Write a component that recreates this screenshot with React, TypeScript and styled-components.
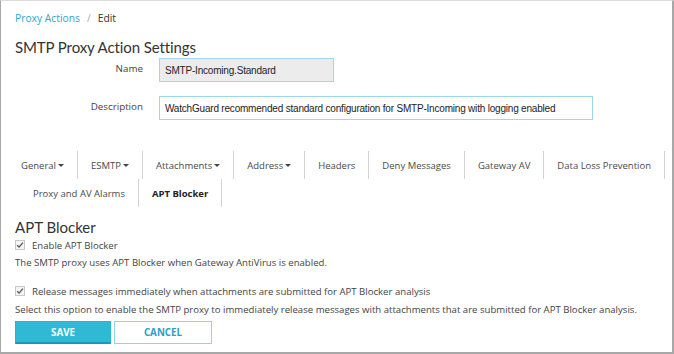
import styled, { createGlobalStyle } from "styled-components";

const GlobalStyle = createGlobalStyle`
  html, body {
    margin: 0;
    padding: 0;
    background: #ffffff;
  }
  * {
    box-sizing: border-box;
  }
`;

const Page = styled.div`
  width: 674px;
  height: 354px;
  display: flex;
  flex-direction: column;
  padding: 9px 0 0 14px;
  background: #ffffff;
  border-top: 1px solid #dcdcdc;
  border-left: 1px solid #a8a8a8;
  border-right: 2px solid #a8a8a8;
  border-bottom: 2px solid #a8a8a8;
  font-family: "Open Sans", "Liberation Sans", sans-serif;
  color: #333333;
  overflow: hidden;
`;

const Breadcrumb = styled.nav`
  display: flex;
  align-items: center;
  gap: 7px;
  height: 16px;
  font-size: 10.3px;
  color: #333333;
`;

const CrumbLink = styled.a`
  color: #2fa8cc;
  text-decoration: none;
`;

const CrumbSep = styled.span`
  color: #aaaaaa;
`;

const Title = styled.h1`
  margin: 11px 0 0 0;
  height: 20px;
  line-height: 20px;
  font-family: "Lato", "Open Sans", sans-serif;
  font-weight: 400;
  font-size: 15px;
  letter-spacing: -0.1px;
  color: #333333;
`;

const Form = styled.div`
  display: grid;
  grid-template-columns: 128px auto;
  column-gap: 16px;
  row-gap: 14px;
  margin-top: 1px;
  align-items: center;
`;

const Label = styled.label`
  text-align: right;
  font-size: 9.8px;
  color: #444444;
  padding-bottom: 4px;
`;

const Field = styled.div<{ $width: number; $readOnly?: boolean }>`
  width: ${(p) => p.$width}px;
  height: 24px;
  display: flex;
  align-items: center;
  padding: 0 5px;
  border: 1px solid #9fd8ea;
  background: ${(p) => (p.$readOnly ? "#ececec" : "#ffffff")};
  font-family: "Liberation Sans", Arial, sans-serif;
  font-size: 10px;
  letter-spacing: -0.2px;
  color: #222222;
  white-space: nowrap;
`;

const Tabs = styled.div`
  margin-top: 31px;
  margin-left: -7px;
  display: flex;
  flex-direction: column;
`;

const TabRow = styled.div<{ $indent?: number }>`
  display: flex;
  padding-left: ${(p) => p.$indent ?? 0}px;
`;

const Tab = styled.div<{ $active?: boolean }>`
  height: 28px;
  display: flex;
  align-items: center;
  padding: 0 13px;
  border-right: 1px solid #d3d3d3;
  font-size: 9.5px;
  font-weight: ${(p) => (p.$active ? 700 : 400)};
  color: ${(p) => (p.$active ? "#222222" : "#4a4a4a")};
  white-space: nowrap;
`;

const Caret = styled.span`
  display: inline-block;
  margin-left: 2px;
  margin-top: 1px;
  width: 0;
  height: 0;
  border-left: 3px solid transparent;
  border-right: 3px solid transparent;
  border-top: 3px solid #444444;
`;

const SectionTitle = styled.h2`
  margin: 10px 0 0 0;
  height: 20px;
  line-height: 20px;
  font-family: "Lato", "Open Sans", sans-serif;
  font-weight: 400;
  font-size: 15px;
  color: #333333;
`;

const CheckRow = styled.div<{ $top: number }>`
  display: flex;
  align-items: center;
  gap: 7px;
  height: 16px;
  margin-top: ${(p) => p.$top}px;
  font-size: 9.6px;
  color: #444444;
`;

const Box = styled.span`
  width: 10px;
  height: 10px;
  border: 1px solid #c8c8c8;
  background: #f4f4f4;
  display: flex;
  align-items: center;
  justify-content: center;
`;

const Help = styled.p<{ $top: number }>`
  margin: ${(p) => p.$top}px 0 0 0;
  height: 16px;
  line-height: 16px;
  font-size: 9.6px;
  color: #444444;
`;

const Actions = styled.div`
  display: flex;
  gap: 3px;
  margin-top: 3px;
`;

const Button = styled.button<{ $primary?: boolean }>`
  width: ${(p) => (p.$primary ? 96 : 98)}px;
  height: 23px;
  border: 1px solid ${(p) => (p.$primary ? "#28b3cf" : "#8fd6e8")};
  border-bottom: ${(p) => (p.$primary ? "2px solid #1f97b0" : "1px solid #8fd6e8")};
  background: ${(p) => (p.$primary ? "#2eb9d4" : "#ffffff")};
  color: ${(p) => (p.$primary ? "#ffffff" : "#2aa0c4")};
  font-family: "Open Sans", "Liberation Sans", sans-serif;
  font-weight: 700;
  font-size: 9.8px;
  padding: 0;
  cursor: pointer;
`;

function Check() {
  return (
    <Box>
      <svg width="8" height="8" viewBox="0 0 8 8">
        <path d="M1.2 4.2 L3.1 6.1 L6.9 1.6" fill="none" stroke="#555" strokeWidth="1.3" />
      </svg>
    </Box>
  );
}

const firstRow: { label: string; menu?: boolean }[] = [
  { label: "General", menu: true },
  { label: "ESMTP", menu: true },
  { label: "Attachments", menu: true },
  { label: "Address", menu: true },
  { label: "Headers" },
  { label: "Deny Messages" },
  { label: "Gateway AV" },
  { label: "Data Loss Prevention" },
];

export default function App() {
  return (
    <>
      <GlobalStyle />
      <Page>
        <Breadcrumb>
          <CrumbLink href="#">Proxy Actions</CrumbLink>
          <CrumbSep>/</CrumbSep>
          <span>Edit</span>
        </Breadcrumb>
        <Title>SMTP Proxy Action Settings</Title>
        <Form>
          <Label>Name</Label>
          <Field $width={175} $readOnly>
            SMTP-Incoming.Standard
          </Field>
          <Label>Description</Label>
          <Field $width={434}>
            WatchGuard recommended standard configuration for SMTP-Incoming with logging enabled
          </Field>
        </Form>
        <Tabs>
          <TabRow>
            {firstRow.map((t) => (
              <Tab key={t.label}>
                {t.label}
                {t.menu && <Caret />}
              </Tab>
            ))}
          </TabRow>
          <TabRow $indent={12}>
            <Tab>Proxy and AV Alarms</Tab>
            <Tab $active>APT Blocker</Tab>
          </TabRow>
        </Tabs>
        <SectionTitle>APT Blocker</SectionTitle>
        <CheckRow $top={0}>
          <Check />
          Enable APT Blocker
        </CheckRow>
        <Help $top={2}>The SMTP proxy uses APT Blocker when Gateway AntiVirus is enabled.</Help>
        <CheckRow $top={12}>
          <Check />
          Release messages immediately when attachments are submitted for APT Blocker analysis
        </CheckRow>
        <Help $top={3}>
          Select this option to enable the SMTP proxy to immediately release messages with attachments that are
          submitted for APT Blocker analysis.
        </Help>
        <Actions>
          <Button $primary>SAVE</Button>
          <Button>CANCEL</Button>
        </Actions>
      </Page>
    </>
  );
}
